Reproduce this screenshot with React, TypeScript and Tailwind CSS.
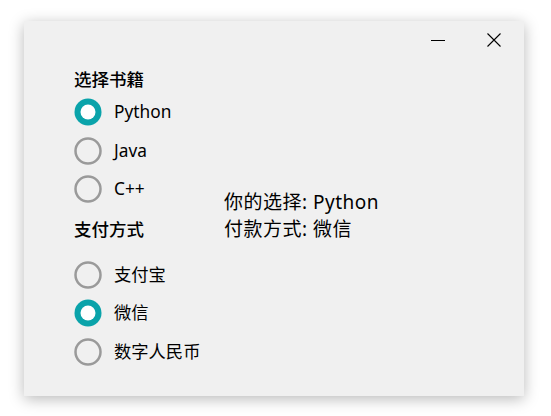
import React from "react";

const FONT = { fontFamily: '"Segoe UI", "Noto Sans", "Noto Sans CJK SC", sans-serif' };

function Radio({ checked, label }: { checked?: boolean; label: string }) {
  return (
    <div className="flex h-[38.5px] items-center gap-[12px]">
      <svg width="28" height="28" viewBox="0 0 28 28" className="shrink-0">
        {checked ? (
          <>
            <circle cx="14" cy="14" r="13.5" fill="#0aa3aa" />
            <circle cx="14" cy="14" r="7.5" fill="#ffffff" />
          </>
        ) : (
          <circle cx="14" cy="14" r="12.5" fill="none" stroke="#9a9a9a" strokeWidth="2.5" />
        )}
      </svg>
      <span className="text-[17.3px] leading-[24px] text-black">{label}</span>
    </div>
  );
}

export default function App() {
  return (
    <div className="h-[416px] w-[551px] bg-white pl-[24px] pt-[21px]" style={FONT}>
      <div className="flex h-[375px] w-[500px] flex-col bg-[#f0f0f0] shadow-[0_3px_14px_rgba(0,0,0,0.28)]">
        <div className="flex h-[38px] items-center justify-end gap-[16px] pr-[10.5px]">
          <div className="flex h-[32px] w-[40px] items-center justify-center">
            <div className="h-px w-[14px] bg-black" />
          </div>
          <div className="flex h-[32px] w-[40px] items-center justify-center">
            <svg width="14" height="14" viewBox="0 0 14 14">
              <path d="M0.5 0.5 L13.5 13.5 M13.5 0.5 L0.5 13.5" stroke="#000" strokeWidth="1.1" />
            </svg>
          </div>
        </div>
        <div className="flex pl-[50px]">
          <div className="flex w-[150px] flex-col">
            <div className="mt-[8px] h-[24px] text-[17.5px] font-medium leading-[24px] text-black">选择书籍</div>
            <div className="mt-[2px] flex flex-col">
              <Radio checked label="Python" />
              <Radio label="Java" />
              <Radio label="C++" />
            </div>
            <div className="mt-[8px] h-[24px] text-[17.5px] font-medium leading-[24px] text-black">支付方式</div>
            <div className="mt-[15px] flex flex-col">
              <Radio label="支付宝" />
              <Radio checked label="微信" />
              <Radio label="数字人民币" />
            </div>
          </div>
          <div className="mt-[129.5px] flex flex-col text-[19px] leading-[27px] tracking-[0.5px] text-black">
            <div>你的选择: Python</div>
            <div>付款方式: 微信</div>
          </div>
        </div>
      </div>
    </div>
  );
}
